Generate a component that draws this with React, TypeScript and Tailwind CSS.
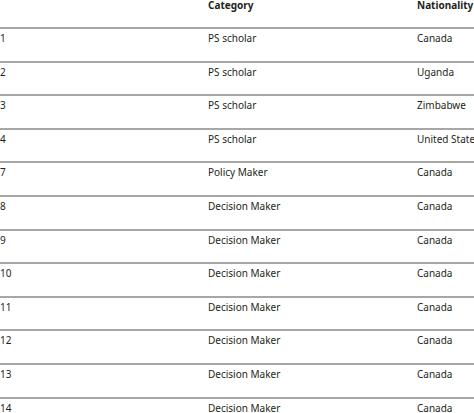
const rows: [string, string, string][] = [
  ["1", "PS scholar", "Canada"],
  ["2", "PS scholar", "Uganda"],
  ["3", "PS scholar", "Zimbabwe"],
  ["4", "PS scholar", "United States"],
  ["7", "Policy Maker", "Canada"],
  ["8", "Decision Maker", "Canada"],
  ["9", "Decision Maker", "Canada"],
  ["10", "Decision Maker", "Canada"],
  ["11", "Decision Maker", "Canada"],
  ["12", "Decision Maker", "Canada"],
  ["13", "Decision Maker", "Canada"],
  ["14", "Decision Maker", "Canada"],
];

export default function App() {
  return (
    <div
      className="w-[474px] h-[413px] overflow-hidden bg-white text-[#231f20] text-[10px] leading-[12px]"
      style={{ fontFamily: '"Noto Sans", "Open Sans", sans-serif' }}
    >
      {/* Header */}
      <div className="flex h-[27px] font-bold whitespace-nowrap leading-[11px]">
        <div className="w-[208px] shrink-0"></div>
        <div className="w-[209px] shrink-0">Category</div>
        <div className="shrink-0">Nationality</div>
      </div>

      {/* Body */}
      {rows.map(([id, category, nationality]) => (
        <div
          key={id}
          className="flex h-[33.6px] border-t-2 border-[#a7a7a7] pt-[3px] whitespace-nowrap"
        >
          <div className="w-[208px] shrink-0">{id}</div>
          <div className="w-[209px] shrink-0">{category}</div>
          <div className="shrink-0">{nationality}</div>
        </div>
      ))}
    </div>
  );
}
